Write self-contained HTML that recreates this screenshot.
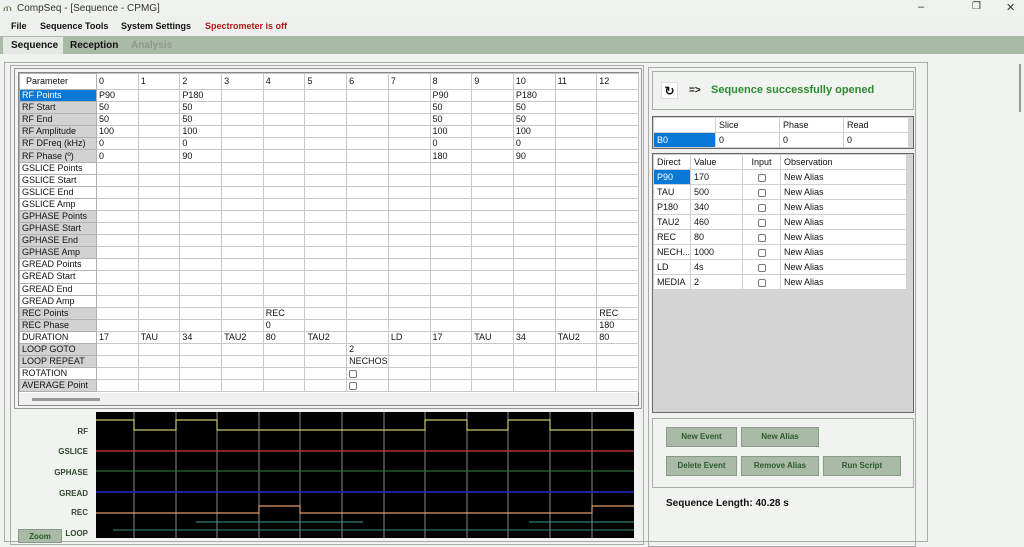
<!DOCTYPE html><html><head><style>
*{margin:0;padding:0;box-sizing:border-box}
body{width:1024px;height:538px;overflow:hidden;background:#f1f3f1;font-family:"Liberation Sans",Tahoma,sans-serif;font-size:9px;color:#111;position:relative}
.a{position:absolute}
#title{left:0;top:0;width:1024px;height:17px;background:#eef1ee;font-size:10px;color:#333}
#menu{left:0;top:17px;width:1024px;height:19px;background:#edf0ed;font-weight:bold;font-size:9px}
#tabs{left:0;top:36px;width:1024px;height:18px;background:#a9bba6}
table{border-collapse:collapse;table-layout:fixed}
#t td{border:1px solid #c8c8c8;height:12.1px;padding:0 2px;line-height:11px;white-space:nowrap;overflow:hidden;font-size:9px}
#t td.p{background:#d2d2d2;border-color:#b0b0b0}
#t td.w{background:#fff;border-color:#b0b0b0}
#t tr.h td{height:16px;line-height:15px;background:#fff}
.cb{display:inline-block;width:8px;height:8px;border:1px solid #777;border-radius:2px;background:#fff;vertical-align:middle}
.sel{background:#0a78d7!important;color:#fff}
.lab{font-weight:bold;color:#2e4a2e;font-size:8px;text-align:right;width:60px;left:28px}
.btn{background:#a9bba6;border:1px solid #8a9a88;color:#2a5a2a;font-weight:bold;font-size:8px;text-align:center;line-height:18px;height:20px}
#d td{border:1px solid #d0d0d0;height:15px;padding:0 3px;background:#fff;font-size:9px;white-space:nowrap}
</style></head><body>
<div class="a" id="title"><span class="a" style="left:3px;top:2px;color:#5a7a4a;font-size:11px">ጠ</span><span class="a" style="left:17px;top:3px">CompSeq - [Sequence - CPMG]</span><span class="a" style="left:918px;top:1px;font-size:11px">–</span><span class="a" style="left:972px;top:1px;font-size:10px">❐</span><span class="a" style="left:1006px;top:1px;font-size:11px">✕</span></div>
<div class="a" id="menu"><span class="a" style="left:11px;top:4px">File</span><span class="a" style="left:40px;top:4px">Sequence Tools</span><span class="a" style="left:121px;top:4px">System Settings</span><span class="a" style="left:205px;top:4px;color:#b01818">Spectrometer is off</span></div>
<div class="a" id="tabs"><div class="a" style="left:3px;top:1px;width:60px;height:17px;background:#e4e9e3"></div><span class="a" style="left:11px;top:4px;font-weight:bold;font-size:10px">Sequence</span><span class="a" style="left:70px;top:4px;font-weight:bold;font-size:10px">Reception</span><span class="a" style="left:131px;top:4px;font-weight:bold;font-size:10px;color:#8d9a8b">Analysis</span></div>
<div class="a" style="left:4px;top:62px;width:924px;height:480px;border:1px solid #aaa;background:#f1f3f1"></div>
<div class="a" style="left:10px;top:65px;width:634px;height:480px;border:1px solid #aaa"></div>
<div class="a" style="left:14px;top:68px;width:628px;height:341px;border:1px solid #999;background:#f4f4f4"></div>
<div class="a" style="left:18px;top:72px;width:621px;height:334px;border:1px solid #888;background:#fff"></div>
<table id="t" class="a" style="left:19px;top:73px;width:619px">
<colgroup><col style="width:77px"><col span="13" style="width:41.7px"></colgroup>
<tr class="h"><td class="w" style="padding-left:6px">Parameter</td><td>0</td><td>1</td><td>2</td><td>3</td><td>4</td><td>5</td><td>6</td><td>7</td><td>8</td><td>9</td><td>10</td><td>11</td><td>12</td></tr>
<tr><td class="p sel">RF Points</td><td>P90</td><td></td><td>P180</td><td></td><td></td><td></td><td></td><td></td><td>P90</td><td></td><td>P180</td><td></td><td></td></tr>
<tr><td class="p">RF Start</td><td>50</td><td></td><td>50</td><td></td><td></td><td></td><td></td><td></td><td>50</td><td></td><td>50</td><td></td><td></td></tr>
<tr><td class="p">RF End</td><td>50</td><td></td><td>50</td><td></td><td></td><td></td><td></td><td></td><td>50</td><td></td><td>50</td><td></td><td></td></tr>
<tr><td class="p">RF Amplitude</td><td>100</td><td></td><td>100</td><td></td><td></td><td></td><td></td><td></td><td>100</td><td></td><td>100</td><td></td><td></td></tr>
<tr><td class="p">RF DFreq (kHz)</td><td>0</td><td></td><td>0</td><td></td><td></td><td></td><td></td><td></td><td>0</td><td></td><td>0</td><td></td><td></td></tr>
<tr><td class="p">RF Phase (º)</td><td>0</td><td></td><td>90</td><td></td><td></td><td></td><td></td><td></td><td>180</td><td></td><td>90</td><td></td><td></td></tr>
<tr><td class="w">GSLICE Points</td><td></td><td></td><td></td><td></td><td></td><td></td><td></td><td></td><td></td><td></td><td></td><td></td><td></td></tr>
<tr><td class="w">GSLICE Start</td><td></td><td></td><td></td><td></td><td></td><td></td><td></td><td></td><td></td><td></td><td></td><td></td><td></td></tr>
<tr><td class="w">GSLICE End</td><td></td><td></td><td></td><td></td><td></td><td></td><td></td><td></td><td></td><td></td><td></td><td></td><td></td></tr>
<tr><td class="w">GSLICE Amp</td><td></td><td></td><td></td><td></td><td></td><td></td><td></td><td></td><td></td><td></td><td></td><td></td><td></td></tr>
<tr><td class="p">GPHASE Points</td><td></td><td></td><td></td><td></td><td></td><td></td><td></td><td></td><td></td><td></td><td></td><td></td><td></td></tr>
<tr><td class="p">GPHASE Start</td><td></td><td></td><td></td><td></td><td></td><td></td><td></td><td></td><td></td><td></td><td></td><td></td><td></td></tr>
<tr><td class="p">GPHASE End</td><td></td><td></td><td></td><td></td><td></td><td></td><td></td><td></td><td></td><td></td><td></td><td></td><td></td></tr>
<tr><td class="p">GPHASE Amp</td><td></td><td></td><td></td><td></td><td></td><td></td><td></td><td></td><td></td><td></td><td></td><td></td><td></td></tr>
<tr><td class="w">GREAD Points</td><td></td><td></td><td></td><td></td><td></td><td></td><td></td><td></td><td></td><td></td><td></td><td></td><td></td></tr>
<tr><td class="w">GREAD Start</td><td></td><td></td><td></td><td></td><td></td><td></td><td></td><td></td><td></td><td></td><td></td><td></td><td></td></tr>
<tr><td class="w">GREAD End</td><td></td><td></td><td></td><td></td><td></td><td></td><td></td><td></td><td></td><td></td><td></td><td></td><td></td></tr>
<tr><td class="w">GREAD Amp</td><td></td><td></td><td></td><td></td><td></td><td></td><td></td><td></td><td></td><td></td><td></td><td></td><td></td></tr>
<tr><td class="p">REC Points</td><td></td><td></td><td></td><td></td><td>REC</td><td></td><td></td><td></td><td></td><td></td><td></td><td></td><td>REC</td></tr>
<tr><td class="p">REC Phase</td><td></td><td></td><td></td><td></td><td>0</td><td></td><td></td><td></td><td></td><td></td><td></td><td></td><td>180</td></tr>
<tr><td class="w">DURATION</td><td>17</td><td>TAU</td><td>34</td><td>TAU2</td><td>80</td><td>TAU2</td><td></td><td>LD</td><td>17</td><td>TAU</td><td>34</td><td>TAU2</td><td>80</td></tr>
<tr><td class="p">LOOP GOTO</td><td></td><td></td><td></td><td></td><td></td><td></td><td>2</td><td></td><td></td><td></td><td></td><td></td><td></td></tr>
<tr><td class="p">LOOP REPEAT</td><td></td><td></td><td></td><td></td><td></td><td></td><td>NECHOS</td><td></td><td></td><td></td><td></td><td></td><td></td></tr>
<tr><td class="w">ROTATION</td><td></td><td></td><td></td><td></td><td></td><td></td><td><span class="cb"></span></td><td></td><td></td><td></td><td></td><td></td><td></td></tr>
<tr><td class="p">AVERAGE Point</td><td></td><td></td><td></td><td></td><td></td><td></td><td><span class="cb"></span></td><td></td><td></td><td></td><td></td><td></td><td></td></tr>
</table>
<div class="a" style="left:19px;top:393px;width:619px;height:12px;background:#f0f0f0"></div>
<div class="a" style="left:32px;top:398px;width:68px;height:3px;background:#999"></div>
<div class="a lab" style="top:427px">RF</div>
<div class="a lab" style="top:447px">GSLICE</div>
<div class="a lab" style="top:468px">GPHASE</div>
<div class="a lab" style="top:489px">GREAD</div>
<div class="a lab" style="top:508px">REC</div>
<div class="a lab" style="top:529px">LOOP</div>
<div class="a btn" style="left:18px;top:529px;width:44px;height:14px;line-height:14px">Zoom</div>
<svg class="a" style="left:96px;top:412px" width="538" height="126">
<rect width="538" height="126" fill="#000"/>
<g stroke="#888" stroke-width="1">
<line x1="38" y1="0" x2="38" y2="126"/><line x1="80" y1="0" x2="80" y2="126"/><line x1="121" y1="0" x2="121" y2="126"/><line x1="163" y1="0" x2="163" y2="126"/><line x1="204" y1="0" x2="204" y2="126"/><line x1="246" y1="0" x2="246" y2="126"/><line x1="288" y1="0" x2="288" y2="126"/><line x1="329" y1="0" x2="329" y2="126"/><line x1="371" y1="0" x2="371" y2="126"/><line x1="412" y1="0" x2="412" y2="126"/><line x1="454" y1="0" x2="454" y2="126"/><line x1="496" y1="0" x2="496" y2="126"/></g>
<polyline fill="none" stroke="#c8c86a" stroke-width="1.2" points="0,8 38,8 38,18 80,18 80,8 121,8 121,18 329,18 329,8 371,8 371,18 412,18 412,8 454,8 454,18 538,18"/>
<line x1="0" y1="39" x2="538" y2="39" stroke="#d23a3a" stroke-width="1.2"/>
<line x1="0" y1="59" x2="538" y2="59" stroke="#2f6a2f" stroke-width="1.2"/>
<line x1="0" y1="80" x2="538" y2="80" stroke="#2828c8" stroke-width="1.5"/>
<polyline fill="none" stroke="#e09a6a" stroke-width="1.2" points="0,101 163,101 163,94 204,94 204,101 496,101 496,94 538,94"/>
<line x1="100" y1="110" x2="267" y2="110" stroke="#3a9a9a" stroke-width="1"/>
<line x1="433" y1="110" x2="538" y2="110" stroke="#3a9a9a" stroke-width="1"/>
<line x1="17" y1="118" x2="538" y2="118" stroke="#3a8a7a" stroke-width="1"/>
</svg>
<div class="a" style="left:648px;top:67px;width:268px;height:480px;border:1px solid #aaa"></div>
<div class="a" style="left:652px;top:71px;width:262px;height:39px;border:1px solid #aaa;background:#f1f3f1"></div>
<div class="a" style="left:661px;top:82px;width:17px;height:17px;background:#fff;border:1px solid #ddd;font-weight:bold;font-size:12px;text-align:center;line-height:16px">↻</div>
<span class="a" style="left:689px;top:85px;font-weight:bold;font-size:10px">=&gt;</span>
<span class="a" style="left:711px;top:84px;font-weight:bold;font-size:11px;color:#2e8a2e">Sequence successfully opened</span>
<div class="a" style="left:652px;top:116px;width:262px;height:33px;border:1px solid #666;background:#d4d4d4"></div>
<table id="d" class="a" style="left:653px;top:117px;width:255px"><colgroup><col style="width:62px"><col style="width:64px"><col style="width:64px"><col style="width:65px"></colgroup>
<tr><td></td><td>Slice</td><td>Phase</td><td>Read</td></tr>
<tr><td class="sel">B0</td><td>0</td><td>0</td><td>0</td></tr></table>
<div class="a" style="left:652px;top:153px;width:262px;height:260px;border:1px solid #666;background:#d4d4d4"></div>
<table id="d" class="a" style="left:653px;top:154px;width:253px"><colgroup><col style="width:37px"><col style="width:52px"><col style="width:38px"><col style="width:126px"></colgroup>
<tr><td>Direct</td><td>Value</td><td style="text-align:center">Input</td><td>Observation</td></tr>
<tr><td class="sel">P90</td><td>170</td><td style="text-align:center"><span class="cb"></span></td><td>New Alias</td></tr>
<tr><td>TAU</td><td>500</td><td style="text-align:center"><span class="cb"></span></td><td>New Alias</td></tr>
<tr><td>P180</td><td>340</td><td style="text-align:center"><span class="cb"></span></td><td>New Alias</td></tr>
<tr><td>TAU2</td><td>460</td><td style="text-align:center"><span class="cb"></span></td><td>New Alias</td></tr>
<tr><td>REC</td><td>80</td><td style="text-align:center"><span class="cb"></span></td><td>New Alias</td></tr>
<tr><td>NECH...</td><td>1000</td><td style="text-align:center"><span class="cb"></span></td><td>New Alias</td></tr>
<tr><td>LD</td><td>4s</td><td style="text-align:center"><span class="cb"></span></td><td>New Alias</td></tr>
<tr><td>MEDIA</td><td>2</td><td style="text-align:center"><span class="cb"></span></td><td>New Alias</td></tr></table>
<div class="a" style="left:652px;top:418px;width:262px;height:70px;border:1px solid #aaa"></div>
<div class="a btn" style="left:666px;top:427px;width:71px">New Event</div>
<div class="a btn" style="left:741px;top:427px;width:78px">New Alias</div>
<div class="a btn" style="left:666px;top:456px;width:71px">Delete Event</div>
<div class="a btn" style="left:741px;top:456px;width:78px">Remove Alias</div>
<div class="a btn" style="left:823px;top:456px;width:78px">Run Script</div>
<span class="a" style="left:666px;top:498px;font-weight:bold;font-size:10px">Sequence Length: 40.28 s</span>
<div class="a" style="left:1019px;top:64px;width:2px;height:48px;background:#999"></div>
</body></html>
